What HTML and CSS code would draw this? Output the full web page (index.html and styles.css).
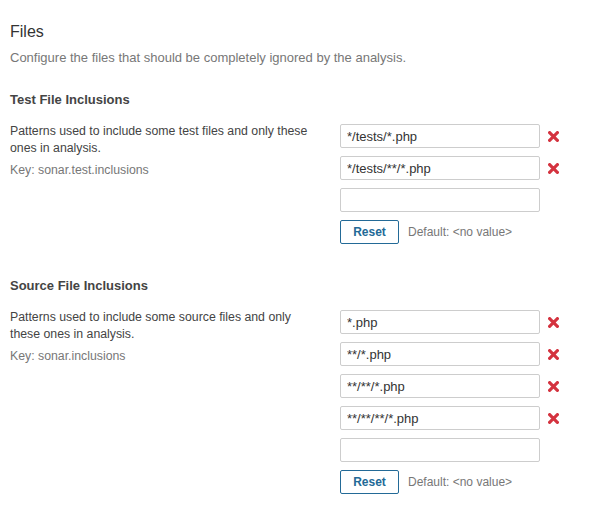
FILE: index.html
```html
<!DOCTYPE html>
<html>
<head>
<meta charset="utf-8">
<link rel="stylesheet" href="styles.css">
</head>
<body>
<div class="page">
  <h1 class="page-title">Files</h1>
  <p class="page-desc">Configure the files that should be completely ignored by the analysis.</p>

  <section class="setting">
    <h2 class="setting-title">Test File Inclusions</h2>
    <div class="setting-row">
      <div class="setting-info">
        <p class="setting-desc">Patterns used to include some test files and only these ones in analysis.</p>
        <p class="setting-key">Key: sonar.test.inclusions</p>
      </div>
      <div class="setting-values">
        <div class="value-row"><input class="value-input" type="text" value="*/tests/*.php"><svg class="remove" viewBox="0 0 10 10"><path d="M1.5 1.5L8.5 8.5M8.5 1.5L1.5 8.5"/></svg></div>
        <div class="value-row"><input class="value-input" type="text" value="*/tests/**/*.php"><svg class="remove" viewBox="0 0 10 10"><path d="M1.5 1.5L8.5 8.5M8.5 1.5L1.5 8.5"/></svg></div>
        <div class="value-row"><input class="value-input" type="text" value=""></div>
        <div class="actions"><button class="btn-reset">Reset</button><span class="default">Default: &lt;no value&gt;</span></div>
      </div>
    </div>
  </section>

  <section class="setting">
    <h2 class="setting-title">Source File Inclusions</h2>
    <div class="setting-row">
      <div class="setting-info">
        <p class="setting-desc">Patterns used to include some source files and only these ones in analysis.</p>
        <p class="setting-key">Key: sonar.inclusions</p>
      </div>
      <div class="setting-values">
        <div class="value-row"><input class="value-input" type="text" value="*.php"><svg class="remove" viewBox="0 0 10 10"><path d="M1.5 1.5L8.5 8.5M8.5 1.5L1.5 8.5"/></svg></div>
        <div class="value-row"><input class="value-input" type="text" value="**/*.php"><svg class="remove" viewBox="0 0 10 10"><path d="M1.5 1.5L8.5 8.5M8.5 1.5L1.5 8.5"/></svg></div>
        <div class="value-row"><input class="value-input" type="text" value="**/**/*.php"><svg class="remove" viewBox="0 0 10 10"><path d="M1.5 1.5L8.5 8.5M8.5 1.5L1.5 8.5"/></svg></div>
        <div class="value-row"><input class="value-input" type="text" value="**/**/**/*.php"><svg class="remove" viewBox="0 0 10 10"><path d="M1.5 1.5L8.5 8.5M8.5 1.5L1.5 8.5"/></svg></div>
        <div class="value-row"><input class="value-input" type="text" value=""></div>
        <div class="actions"><button class="btn-reset">Reset</button><span class="default">Default: &lt;no value&gt;</span></div>
      </div>
    </div>
  </section>
</div>
</body>
</html>
```

FILE: styles.css
```css
* { box-sizing: border-box; }
body {
  margin: 0;
  background: #fff;
  font-family: "Liberation Sans", Arial, sans-serif;
  color: #444;
}
.page {
  padding: 20px 10px 0 10px;
}
.page-title {
  margin: 0;
  font-size: 16px;
  line-height: 24px;
  font-weight: normal;
  color: #333;
}
.page-desc {
  margin: 5px 0 0 0;
  font-size: 13px;
  line-height: 18px;
  color: #777;
}
.setting {
  margin-top: 23px;
}
.setting + .setting {
  margin-top: 32px;
}
.setting-title {
  margin: 0;
  font-size: 13px;
  line-height: 20px;
  font-weight: bold;
  color: #444;
}
.setting-row {
  display: flex;
  margin-top: 13px;
}
.setting-info {
  width: 320px;
  padding-right: 22px;
}
.setting-desc {
  margin: 0;
  font-size: 12.3px;
  line-height: 17px;
  color: #444;
}
.setting-key {
  margin: 5px 0 0 0;
  font-size: 12.3px;
  line-height: 17px;
  color: #777;
}
.setting-values {
  margin-left: 10px;
  padding-top: 1px;
  display: flex;
  flex-direction: column;
  gap: 8px;
}
.value-row {
  display: flex;
  align-items: center;
  height: 24px;
}
.value-input {
  width: 200px;
  height: 24px;
  margin: 0;
  padding: 0 6px;
  border: 1px solid #cdcdcd;
  border-radius: 2px;
  font-family: "Liberation Sans", Arial, sans-serif;
  font-size: 13px;
  color: #333;
  background: #fff;
}
.remove {
  width: 11px;
  height: 11px;
  margin-left: 8px;
  fill: none;
  stroke: #d4333f;
  stroke-width: 2.8;
  stroke-linecap: square;
}
.actions {
  display: flex;
  align-items: center;
  height: 24px;
}
.btn-reset {
  width: 59px;
  height: 24px;
  margin: 0;
  padding: 0;
  border: 1px solid #236a97;
  border-radius: 2px;
  background: #fff;
  color: #236a97;
  font-family: "Liberation Sans", Arial, sans-serif;
  font-size: 12px;
  font-weight: bold;
}
.default {
  margin-left: 9px;
  font-size: 12px;
  color: #777;
}
```
